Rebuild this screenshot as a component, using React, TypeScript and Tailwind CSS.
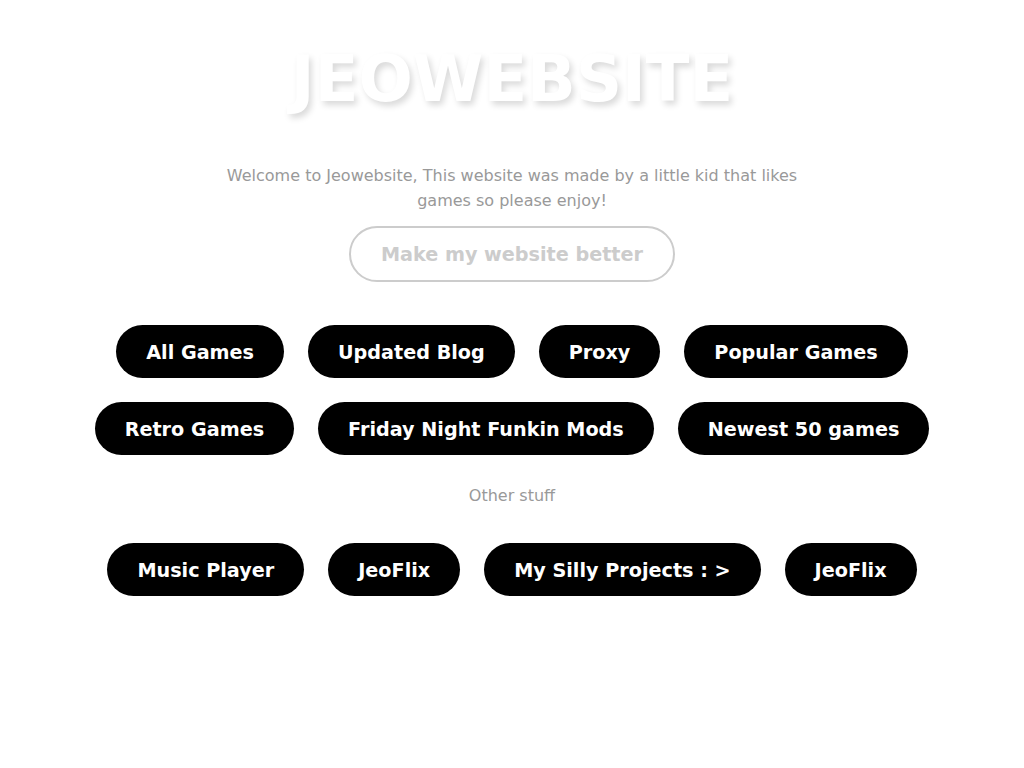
const mainLinks = [
  'All Games',
  'Updated Blog',
  'Proxy',
  'Popular Games',
  'Retro Games',
  'Friday Night Funkin Mods',
  'Newest 50 games',
];

const otherLinks = ['Music Player', 'JeoFlix', 'My Silly Projects : >', 'JeoFlix'];

function PillLink({ label }: { label: string }) {
  return (
    <a
      href="#"
      className="rounded-full bg-black px-[30px] pt-[16px] pb-[14px] text-[19.2px] font-bold leading-[23px] text-white"
    >
      {label}
    </a>
  );
}

export default function App() {
  return (
    <div className="min-h-screen bg-white text-center font-['DejaVu_Sans',sans-serif]">
      <div className="flex flex-col items-center">
        <h1 className="mt-[42px] text-[64px] font-bold leading-[75px] text-white [text-shadow:3px_4px_6px_rgba(0,0,0,0.15)]">
          JEOWEBSITE
        </h1>

        <p className="mt-[46px] max-w-[600px] text-[16px] leading-[25px] text-[#999999]">
          Welcome to Jeowebsite, This website was made by a little kid that likes games so please
          enjoy!
        </p>

        <a
          href="#"
          className="mt-[13px] rounded-full border-2 border-[#cccccc] px-[30px] pt-[15px] pb-[13px] text-[19.2px] font-bold leading-[24px] text-[#cccccc]"
        >
          Make my website better
        </a>

        {/* Main links */}
        <div className="mt-[43px] flex max-w-[860px] flex-wrap justify-center gap-6">
          {mainLinks.map((l) => (
            <PillLink key={l} label={l} />
          ))}
        </div>

        <p className="mt-[29px] text-[16px] leading-6 text-[#999999]">Other stuff</p>

        <div className="mt-[35px] flex flex-wrap justify-center gap-6">
          {otherLinks.map((l, i) => (
            <PillLink key={i} label={l} />
          ))}
        </div>
      </div>
    </div>
  );
}
